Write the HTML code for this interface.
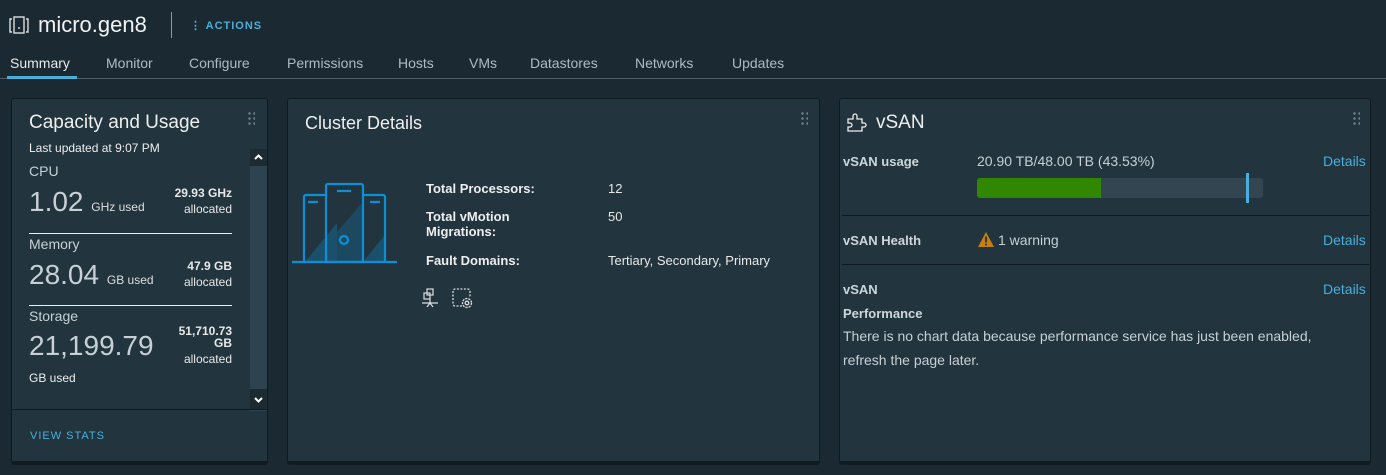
<!DOCTYPE html>
<html><head><style>
*{box-sizing:border-box;margin:0;padding:0}
body{width:1386px;height:475px;background:#1b2a32;font-family:"Liberation Sans",sans-serif;color:#e8e8e8;position:relative;overflow:hidden}
.abs{position:absolute}
.card{position:absolute;background:#22343e;border:1px solid #0f1a20;border-bottom:4px solid #111b20;border-radius:3px}
.tab{position:absolute;top:55px;font-size:14px;color:#adbbc4}
.grip{position:absolute;width:8px;height:14px;background-image:radial-gradient(circle,#6b7c85 1.2px,transparent 1.4px);background-size:5px 5px}
.lbl{font-size:13px;font-weight:bold;color:#cfd6da}
.det{color:#49afd9;font-size:14px}
</style></head><body>
<svg class="abs" style="left:9px;top:16px" width="20" height="18" viewBox="0 0 20 18" fill="none" stroke="#ddd" stroke-width="1.4"><rect x="5" y="1" width="10" height="16"/><path d="M3 3H1v13h2M17 3h2v13h-2"/><rect x="9.3" y="11" width="1.4" height="2" fill="#ddd" stroke="none"/></svg>
<div class="abs" style="left:38px;top:12px;font-size:22px;color:#f2f2f2">micro.gen8</div>
<div class="abs" style="left:171px;top:12px;width:1px;height:26px;background:#8a9aa3"></div>
<div class="abs" style="left:190px;top:19px;font-size:11px;color:#49afd9;font-weight:bold;letter-spacing:1px">⋮ ACTIONS</div>
<div class="tab" style="left:10px;color:#e8e8e8">Summary</div>
<div class="tab" style="left:106px">Monitor</div>
<div class="tab" style="left:189px">Configure</div>
<div class="tab" style="left:287px">Permissions</div>
<div class="tab" style="left:398px">Hosts</div>
<div class="tab" style="left:469px">VMs</div>
<div class="tab" style="left:530px">Datastores</div>
<div class="tab" style="left:635px">Networks</div>
<div class="tab" style="left:732px">Updates</div>
<div class="abs" style="left:0;top:78px;width:1386px;height:1px;background:#4d5e67"></div>
<div class="abs" style="left:7px;top:76px;width:70px;height:3px;background:#49afd9"></div>

<div class="card" style="left:11px;top:98px;width:257px;height:367px"></div>
<div class="grip" style="left:247px;top:111px"></div>
<div class="abs" style="left:29px;top:112px;font-size:19px;color:#eee">Capacity and Usage</div>
<div class="abs" style="left:29px;top:141px;font-size:12px;color:#eee">Last updated at 9:07 PM</div>
<div class="abs" style="left:250px;top:149px;width:17px;height:262px;background:#2d4350"></div>
<div class="abs" style="left:250px;top:149px;width:17px;height:17px;background:#1c2a31"><svg width="17" height="17"><path d="M5 10l3.5-3.5L12 10" stroke="#fff" stroke-width="2" fill="none"/></svg></div>
<div class="abs" style="left:250px;top:389px;width:17px;height:20px;background:#1c2a31"><svg width="17" height="20"><path d="M5 9l3.5 3.5L12 9" stroke="#fff" stroke-width="2" fill="none"/></svg></div>
<div class="abs" style="left:29px;top:163px;font-size:14px;color:#c8d0d5">CPU</div>
<div class="abs" style="left:29px;top:186px;font-size:28px;color:#c8d0d5">1.02 <span style="font-size:12px;color:#ddd">GHz used</span></div>
<div class="abs" style="left:150px;top:185px;width:82px;text-align:right;font-size:12px;line-height:16px"><b>29.93 GHz</b><br>allocated</div>
<div class="abs" style="left:29px;top:233px;width:203px;height:1px;background:#eee"></div>
<div class="abs" style="left:29px;top:236px;font-size:14px;color:#c8d0d5">Memory</div>
<div class="abs" style="left:29px;top:259px;font-size:28px;color:#c8d0d5">28.04 <span style="font-size:12px;color:#ddd">GB used</span></div>
<div class="abs" style="left:150px;top:258px;width:82px;text-align:right;font-size:12px;line-height:16px"><b>47.9 GB</b><br>allocated</div>
<div class="abs" style="left:29px;top:305px;width:203px;height:1px;background:#eee"></div>
<div class="abs" style="left:29px;top:308px;font-size:14px;color:#c8d0d5">Storage</div>
<div class="abs" style="left:29px;top:330px;font-size:28px;color:#c8d0d5">21,199.79</div>
<div class="abs" style="left:29px;top:371px;font-size:12px;color:#eee">GB used</div>
<div class="abs" style="left:150px;top:325px;width:82px;text-align:right;font-size:12px;line-height:12px"><b>51,710.73<br>GB</b></div>
<div class="abs" style="left:150px;top:352px;width:82px;text-align:right;font-size:12px">allocated</div>
<div class="abs" style="left:11px;top:409px;width:257px;height:1px;background:#111b20"></div>
<div class="abs" style="left:30px;top:430px;font-size:11px;color:#49afd9;letter-spacing:1px">VIEW STATS</div>

<div class="card" style="left:287px;top:98px;width:533px;height:367px"></div>
<div class="grip" style="left:800px;top:111px"></div>
<div class="abs" style="left:305px;top:113px;font-size:18px;color:#eee">Cluster Details</div>
<svg class="abs" style="left:292px;top:180px" width="106" height="86" viewBox="0 0 106 86" fill="none" stroke="#0d8fd6" stroke-width="2.2">
<path d="M45 43L13 82h32z M92 56L71 82h21z" fill="#1a5878" stroke="none" opacity=".8"/>
<path d="M71 22L45 52V82h26z" fill="#1a5878" stroke="none" opacity=".6"/>
<rect x="34" y="4" width="37" height="78" rx="2"/>
<path d="M34 15H14a2 2 0 0 0-2 2v65M71 15h20a2 2 0 0 1 2 2v65"/>
<path d="M45 11h14M16 22h10M78 22h10"/><circle cx="52" cy="60" r="4"/>
<path d="M0 82h105"/></svg>
<div class="abs lbl" style="left:426px;top:181px;color:#eee">Total Processors:</div>
<div class="abs" style="left:608px;top:181px;font-size:13px">12</div>
<div class="abs lbl" style="left:426px;top:209px;line-height:15px;color:#eee">Total vMotion<br>Migrations:</div>
<div class="abs" style="left:608px;top:209px;font-size:13px">50</div>
<div class="abs lbl" style="left:426px;top:253px;color:#eee">Fault Domains:</div>
<div class="abs" style="left:608px;top:253px;font-size:13px">Tertiary, Secondary, Primary</div>
<svg class="abs" style="left:421px;top:288px" width="18" height="20" viewBox="0 0 18 20" fill="none" stroke="#ddd" stroke-width="1.2"><rect x="6" y="1" width="6" height="6"/><rect x="3" y="5" width="6" height="6"/><path d="M9 11v4M1 15h16M6 19l3-4 3 4"/></svg>
<svg class="abs" style="left:452px;top:288px" width="22" height="22" viewBox="0 0 22 22" fill="none" stroke="#ddd" stroke-width="1.3"><path d="M10 18H3a2 2 0 0 1-2-2V3a2 2 0 0 1 2-2h13a2 2 0 0 1 2 2v6" stroke-dasharray="2 1.5"/><circle cx="15" cy="15" r="4.5" stroke-dasharray="2.2 1"/><circle cx="15" cy="15" r="1.8"/></svg>

<div class="card" style="left:839px;top:98px;width:532px;height:367px"></div>
<div class="grip" style="left:1352px;top:111px"></div>
<svg class="abs" style="left:846px;top:113px" width="22" height="20" viewBox="0 0 22 20" fill="none" stroke="#eee" stroke-width="1.3"><path d="M2 6h5V3a2 2 0 0 1 4 0v3h5v4h2a2 2 0 0 1 0 4h-2v4H2v-4h2a2 2 0 0 0 0-4H2z"/></svg>
<div class="abs" style="left:876px;top:112px;font-size:19px;color:#eee">vSAN</div>
<div class="abs lbl" style="left:843px;top:154px">vSAN usage</div>
<div class="abs" style="left:977px;top:153px;font-size:14px;color:#c8d0d5">20.90 TB/48.00 TB (43.53%)</div>
<div class="abs det" style="left:1323px;top:153px">Details</div>
<div class="abs" style="left:977px;top:178px;width:286px;height:20px;background:#324551;border-radius:3px;overflow:hidden"><div style="width:124px;height:20px;background:#318700"></div></div>
<div class="abs" style="left:1246px;top:173px;width:3px;height:30px;background:#49afd9"></div>
<div class="abs" style="left:842px;top:215px;width:527px;height:1px;background:#0f1a20"></div>
<div class="abs lbl" style="left:843px;top:233px">vSAN Health</div>
<svg class="abs" style="left:977px;top:231px" width="18" height="17" viewBox="0 0 18 17"><path d="M9 1L17 16H1z" fill="#c87e10"/><rect x="8.2" y="5.5" width="1.6" height="6" fill="#1b2a32"/><rect x="8.2" y="12.8" width="1.6" height="1.6" fill="#1b2a32"/></svg>
<div class="abs" style="left:998px;top:232px;font-size:14px;color:#c8d0d5">1 warning</div>
<div class="abs det" style="left:1323px;top:232px">Details</div>
<div class="abs" style="left:842px;top:264px;width:527px;height:1px;background:#0f1a20"></div>
<div class="abs lbl" style="left:843px;top:282px">vSAN</div>
<div class="abs det" style="left:1323px;top:281px">Details</div>
<div class="abs lbl" style="left:843px;top:306px">Performance</div>
<div class="abs" style="left:843px;top:324px;width:500px;font-size:14px;line-height:24px;color:#c8d0d5">There is no chart data because performance service has just been enabled,<br>refresh the page later.</div>
</body></html>
